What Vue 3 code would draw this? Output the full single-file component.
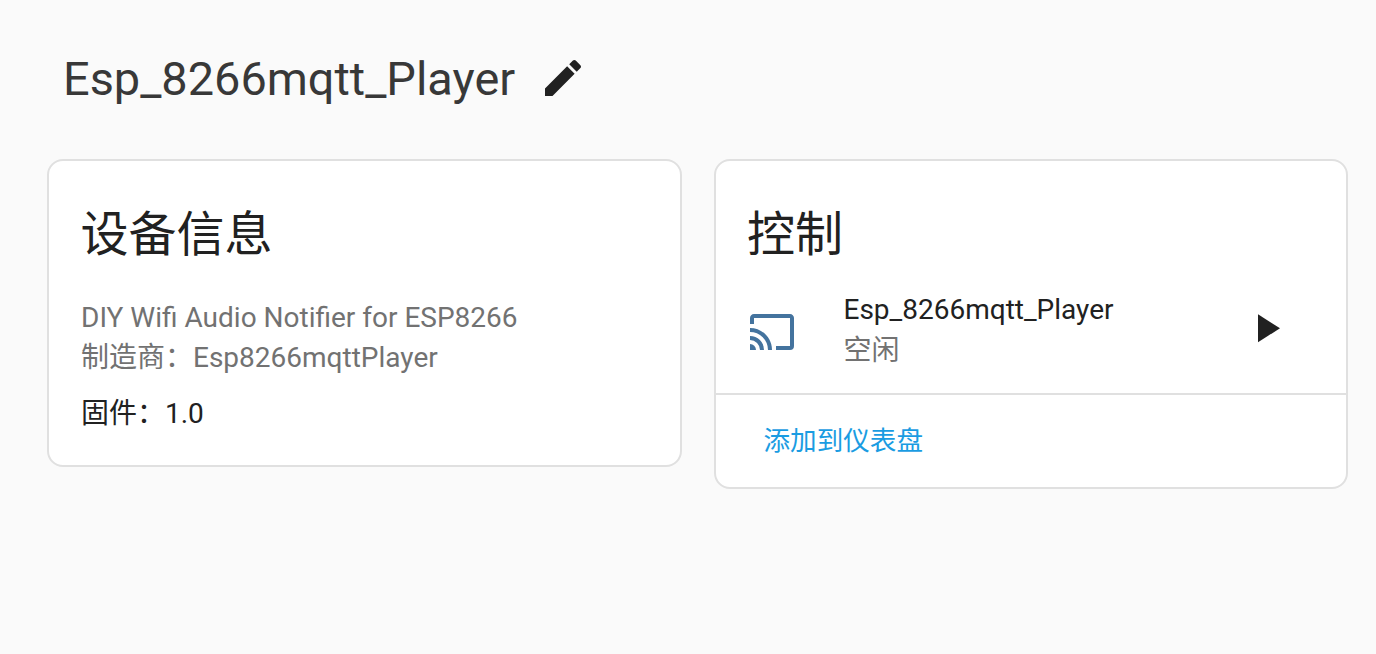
<script setup>
const title = 'Esp_8266mqtt_Player'
</script>

<template>
  <main class="page">
    <header class="head">
      <h1 class="name">{{ title }}</h1>
      <svg class="edit" viewBox="0 0 24 24" width="48" height="48"><path d="M20.71,7.04C21.1,6.65 21.1,6 20.71,5.63L18.37,3.29C18,2.9 17.35,2.9 16.96,3.29L15.12,5.12L18.87,8.87M3,17.25V21H6.75L17.81,9.93L14.06,6.18L3,17.25Z" /></svg>
    </header>
    <div class="cols">
      <section class="card">
        <h2 class="card-title">设备信息</h2>
        <div class="info">
          <div class="secondary">DIY Wifi Audio Notifier for ESP8266</div>
          <div class="secondary">制造商：Esp8266mqttPlayer</div>
          <div class="fw">固件：1.0</div>
        </div>
      </section>
      <section class="card">
        <h2 class="card-title">控制</h2>
        <div class="row">
          <svg class="cast" viewBox="0 0 24 24" width="48" height="48"><path d="M1,10V12A9,9 0 0,1 10,21H12C12,14.92 7.07,10 1,10M1,14V16A5,5 0 0,1 6,21H8A7,7 0 0,0 1,14M1,18V21H4A3,3 0 0,0 1,18M21,3H3C1.89,3 1,3.89 1,5V8H3V5H21V19H14V21H21A2,2 0 0,0 23,19V5C23,3.89 22.1,3 21,3Z" /></svg>
          <div class="texts">
            <div class="primary">{{ title }}</div>
            <div class="state">空闲</div>
          </div>
          <svg class="play" viewBox="0 0 24 24" width="48" height="48"><path d="M8,5.14V19.14L19,12.14L8,5.14Z" /></svg>
        </div>
        <div class="actions"><span class="link">添加到仪表盘</span></div>
      </section>
    </div>
  </main>
</template>

<style scoped>
.page {
  box-sizing: border-box;
  width: 1376px;
  height: 654px;
  padding: 0 28px 0 47px;
  background: #fafafa;
  font-family: Roboto, "Noto Sans CJK SC", sans-serif;
  overflow: hidden;
}
.head {
  display: flex;
  align-items: center;
  height: 159px;
  padding-left: 16px;
  gap: 25px;
  color: #383838;
}
.name {
  margin: 0 0 2px;
  font-size: 46.9px;
  font-weight: 400;
  line-height: 64px;
}
.edit { fill: #212121; margin-bottom: 3px; margin-left: -1px; }
.cols {
  display: flex;
  align-items: flex-start;
  gap: 32px;
}
.card {
  box-sizing: border-box;
  flex: 1 1 0;
  background: #fff;
  border: 2px solid #e0e0e0;
  border-radius: 16px;
  color: #212121;
}
.card-title {
  margin: 0;
  padding: 42px 32px 15px 31.5px;
  font-size: 48px;
  font-weight: 400;
  line-height: 64px;
}
.info {
  padding: 16px 32px 31px;
  font-size: 28px;
  line-height: 40px;
}
.secondary { color: #727272; }
.fw { margin-top: 16px; }
.row {
  display: flex;
  align-items: center;
  height: 98px;
  padding: 0 32px;
}
.cast { fill: #44739e; flex: none; margin-top: 2px; }
.texts {
  flex: 1;
  margin-left: 48px;
  font-size: 28px;
  line-height: 40px;
}
.primary { line-height: 38px; margin-bottom: 2px; }
.state { color: #727272; }
.play { fill: #212121; margin-right: 24px; margin-bottom: 6px; }
.actions {
  border-top: 2px solid #e0e0e0;
  padding: 16px 16px 16px;
  margin-top: 13px;
}
.link {
  display: inline-block;
  padding: 0 32px;
  font-size: 26.6px;
  line-height: 60px;
  color: #1a9ce2;
}
</style>
